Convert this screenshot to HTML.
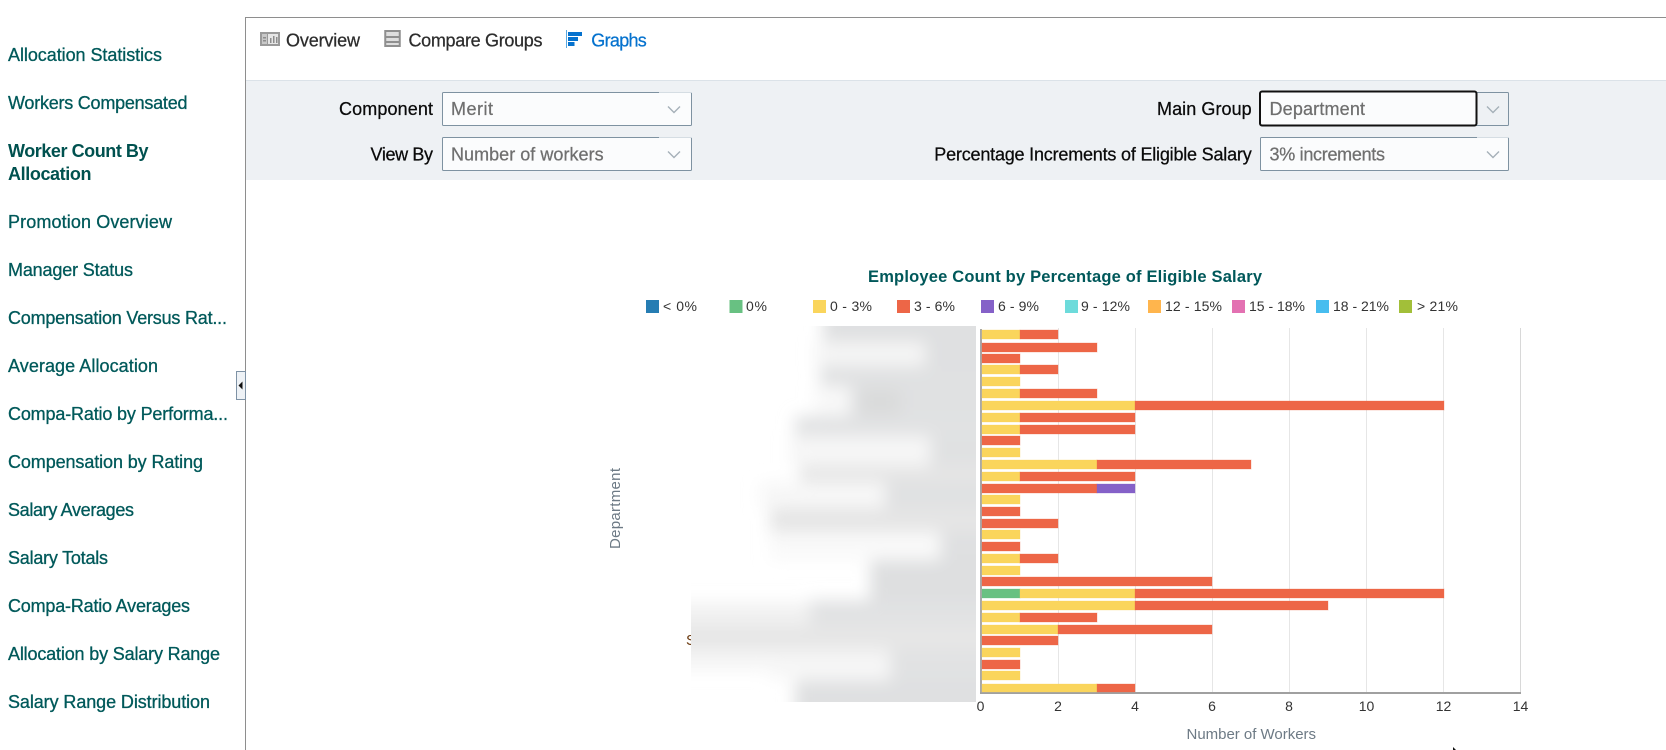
<!DOCTYPE html>
<html lang="en">
<head>
<meta charset="utf-8">
<title>Worker Count By Allocation</title>
<style>
html,body{margin:0;padding:0;background:#fff;width:1666px;height:750px;overflow:hidden}
svg{display:block;font-family:"Liberation Sans",sans-serif}
.s{font-size:18px;fill:#00595a;stroke:#00595a;stroke-width:.3px}
.sb{font-size:18px;fill:#00514f;font-weight:bold}
.t{font-size:18px;fill:#2c2c2c;stroke:#2c2c2c;stroke-width:.25px}
.l{font-size:18px;fill:#0a0a0a;stroke:#0a0a0a;stroke-width:.25px}
.v{font-size:18px;fill:#6f6f6f;stroke:#6f6f6f;stroke-width:.25px}
.lg{font-size:14px;fill:#333}
.x{font-size:14px;fill:#333;text-anchor:middle}
.y{fill:#fad55c;stroke:#fad55c}
.r{fill:#ed6647;stroke:#ed6647}
.p{fill:#8561c8;stroke:#8561c8}
.g{fill:#68c182;stroke:#68c182}
.bars rect{stroke-opacity:.3;stroke-width:1}
</style>
</head>
<body>
<svg width="1666" height="750" viewBox="0 0 1666 750" xmlns="http://www.w3.org/2000/svg">
<defs>
<filter id="b" x="-20%" y="-20%" width="140%" height="140%"><feGaussianBlur stdDeviation="8"/></filter>
<clipPath id="c2"><rect x="691" y="326" width="285" height="376"/></clipPath>
</defs>
<rect width="1666" height="750" fill="#fff"/>

<!-- sidebar -->
<text class="s" x="8" y="61" textLength="154">Allocation Statistics</text>
<text class="s" x="8" y="109" textLength="179.5">Workers Compensated</text>
<text class="sb" x="8" y="157" textLength="140.5">Worker Count By</text>
<text class="sb" x="8" y="180" textLength="83.5">Allocation</text>
<text class="s" x="8" y="228" textLength="164">Promotion Overview</text>
<text class="s" x="8" y="276" textLength="125">Manager Status</text>
<text class="s" x="8" y="324" textLength="219">Compensation Versus Rat...</text>
<text class="s" x="8" y="372" textLength="150">Average Allocation</text>
<text class="s" x="8" y="420" textLength="220">Compa-Ratio by Performa...</text>
<text class="s" x="8" y="468" textLength="195">Compensation by Rating</text>
<text class="s" x="8" y="516" textLength="126">Salary Averages</text>
<text class="s" x="8" y="564" textLength="100">Salary Totals</text>
<text class="s" x="8" y="612" textLength="182">Compa-Ratio Averages</text>
<text class="s" x="8" y="660" textLength="212">Allocation by Salary Range</text>
<text class="s" x="8" y="708" textLength="202">Salary Range Distribution</text>

<!-- panel frame -->
<path d="M245.5 750V17.5H1666" fill="none" stroke="#8e8e8e" stroke-width="1"/>

<!-- collapse handle -->
<rect x="236.5" y="371.5" width="9" height="28" fill="#eef2f6" stroke="#7e92a5"/>
<path d="M238.5 385.5L242.5 381.5V389.5Z" fill="#111"/>

<!-- tabs -->
<rect x="260" y="32" width="20" height="14" fill="#9a9a9a"/>
<rect x="262" y="34" width="5" height="10" fill="#c8c8c8"/>
<rect x="263" y="37" width="3" height="1.5" fill="#8d8d8d"/>
<rect x="263" y="40" width="3" height="1.5" fill="#8d8d8d"/>
<rect x="268" y="34" width="10" height="10" fill="#e6e6e6"/>
<rect x="270" y="38" width="1.5" height="5" fill="#8d8d8d"/>
<rect x="273" y="36" width="1.5" height="7" fill="#8d8d8d"/>
<rect x="276" y="37" width="1.5" height="6" fill="#8d8d8d"/>
<text class="t" x="286" y="46.5" textLength="74">Overview</text>

<rect x="385.25" y="31" width="14.5" height="15" fill="#dedede" stroke="#8f8f8f" stroke-width="2"/>
<rect x="385" y="36" width="15" height="2" fill="#8f8f8f"/>
<rect x="385" y="41" width="15" height="2" fill="#8f8f8f"/>
<text class="t" x="408.5" y="46.5" textLength="134">Compare Groups</text>

<rect x="566" y="30" width="1" height="18" fill="#5aa8e0"/>
<rect x="568" y="32" width="14" height="4" fill="#0572ce"/>
<rect x="568" y="37" width="10" height="4" fill="#0572ce"/>
<rect x="568" y="42" width="6.5" height="4" fill="#0572ce"/>
<text x="591.3" y="46.5" font-size="18" fill="#0572ce" stroke="#0572ce" stroke-width=".25" textLength="55.5">Graphs</text>

<!-- filter band -->
<rect x="246" y="80" width="1420" height="100" fill="#eef1f4"/>
<rect x="246" y="80" width="1420" height="1" fill="#dbe2e8"/>

<text class="l" x="339" y="115" textLength="94">Component</text>
<text class="l" x="370.5" y="160.5" textLength="62.5">View By</text>
<text class="l" x="1157" y="115" textLength="94.7">Main Group</text>
<text class="l" x="934.3" y="160.5" textLength="317.4">Percentage Increments of Eligible Salary</text>

<rect x="442.5" y="92.5" width="249" height="33" rx="1" fill="#fbfcfd" stroke="#7e92a1"/>
<rect x="659" y="92" width="33" height="1" fill="#d5dde3"/>
<path d="M668 106.5L674 112.5L680 106.5" fill="none" stroke="#a5b0b8" stroke-width="1.4"/>
<text class="v" x="451" y="115" textLength="42">Merit</text>

<rect x="442.5" y="137.5" width="249" height="33" rx="1" fill="#fbfcfd" stroke="#7e92a1"/>
<rect x="659" y="137" width="33" height="1" fill="#d5dde3"/>
<path d="M668 151.5L674 157.5L680 151.5" fill="none" stroke="#a5b0b8" stroke-width="1.4"/>
<text class="v" x="451" y="160.5" textLength="152.6">Number of workers</text>

<rect x="1260.5" y="92.5" width="248" height="33" rx="1" fill="#eef1f4" stroke="#7e92a1"/>
<path d="M1487 106.5L1493 112.5L1499 106.5" fill="none" stroke="#a5b0b8" stroke-width="1.4"/>
<rect x="1260" y="91.5" width="216.5" height="34" rx="2" fill="#fbfcfd" stroke="#111" stroke-width="2"/>
<text class="v" x="1269.5" y="115" textLength="95.5">Department</text>

<rect x="1260.5" y="137.5" width="248" height="33" rx="1" fill="#fbfcfd" stroke="#7e92a1"/>
<rect x="1477" y="137" width="32" height="1" fill="#d5dde3"/>
<path d="M1487 151.5L1493 157.5L1499 151.5" fill="none" stroke="#a5b0b8" stroke-width="1.4"/>
<text class="v" x="1269.5" y="160.5" textLength="115.5">3% increments</text>

<!-- chart title -->
<text x="868" y="282" font-size="16.5" font-weight="bold" fill="#00585a" textLength="394">Employee Count by Percentage of Eligible Salary</text>

<!-- legend -->
<rect x="646" y="300" width="13" height="13" fill="#267db3"/><text class="lg" x="663" y="311" textLength="34">&lt; 0%</text>
<rect x="729.5" y="300" width="13" height="13" fill="#68c182"/><text class="lg" x="746" y="311" textLength="21">0%</text>
<rect x="813" y="300" width="13" height="13" fill="#fad55c"/><text class="lg" x="830" y="311" textLength="42">0 - 3%</text>
<rect x="897" y="300" width="13" height="13" fill="#ed6647"/><text class="lg" x="914" y="311" textLength="41">3 - 6%</text>
<rect x="981" y="300" width="13" height="13" fill="#8561c8"/><text class="lg" x="998" y="311" textLength="41">6 - 9%</text>
<rect x="1065" y="300" width="13" height="13" fill="#6ddbdb"/><text class="lg" x="1081" y="311" textLength="49">9 - 12%</text>
<rect x="1148" y="300" width="13" height="13" fill="#ffb54d"/><text class="lg" x="1165" y="311" textLength="57">12 - 15%</text>
<rect x="1232" y="300" width="13" height="13" fill="#e371b2"/><text class="lg" x="1249" y="311" textLength="56">15 - 18%</text>
<rect x="1316" y="300" width="13" height="13" fill="#47bdef"/><text class="lg" x="1333" y="311" textLength="56">18 - 21%</text>
<rect x="1399" y="300" width="13" height="13" fill="#a2bf39"/><text class="lg" x="1417" y="311" textLength="41">&gt; 21%</text>

<!-- axis titles -->
<text transform="translate(620 549) rotate(-90)" font-size="15" fill="#6d7a85" textLength="81">Department</text>
<text x="1186.5" y="739" font-size="15" fill="#6d7a85" textLength="129.5">Number of Workers</text>

<!-- obscured labels -->
<text x="686" y="645" font-size="15" fill="#6b3a10">S</text>
<g clip-path="url(#c2)">
<rect x="691" y="326" width="285" height="376" fill="#fff"/>
<g filter="url(#b)">
<rect x="823" y="300" width="180" height="42" fill="#dfe0e1"/>
<rect x="815" y="342" width="110" height="24" fill="#f5f5f5"/>
<rect x="925" y="342" width="78" height="24" fill="#dfe0e1"/>
<rect x="820" y="366" width="183" height="20" fill="#e0e1e2"/>
<rect x="815" y="386" width="40" height="30" fill="#f8f8f8"/>
<rect x="850" y="386" width="153" height="30" fill="#e0e1e2"/>
<rect x="860" y="390" width="40" height="24" fill="#d9dada"/>
<rect x="795" y="416" width="208" height="20" fill="#e1e2e3"/>
<rect x="790" y="436" width="140" height="30" fill="#f6f6f6"/>
<rect x="930" y="436" width="73" height="30" fill="#e0e1e2"/>
<rect x="800" y="466" width="203" height="16" fill="#e5e5e5"/>
<rect x="760" y="482" width="125" height="26" fill="#f7f7f7"/>
<rect x="885" y="482" width="118" height="26" fill="#e0e1e2"/>
<rect x="770" y="508" width="233" height="24" fill="#e5e5e5"/>
<rect x="770" y="532" width="170" height="28" fill="#f9f9f9"/>
<rect x="940" y="532" width="63" height="28" fill="#dfe0e1"/>
<rect x="870" y="560" width="133" height="40" fill="#dedfe0"/>
<rect x="655" y="603" width="155" height="22" fill="#f1f1f1"/>
<rect x="810" y="600" width="193" height="25" fill="#e1e2e3"/>
<rect x="655" y="625" width="348" height="25" fill="#e6e6e6"/>
<rect x="655" y="650" width="235" height="20" fill="#f5f5f5"/>
<rect x="890" y="650" width="113" height="30" fill="#e1e2e3"/>
<rect x="770" y="670" width="120" height="10" fill="#f8f8f8"/>
<rect x="795" y="680" width="208" height="45" fill="#dfe0e1"/>
</g>
</g>

<!-- grid -->
<g fill="#e6e6e6">
<rect x="1058" y="328" width="1" height="364"/>
<rect x="1135" y="328" width="1" height="364"/>
<rect x="1212" y="328" width="1" height="364"/>
<rect x="1289" y="328" width="1" height="364"/>
<rect x="1366" y="328" width="1" height="364"/>
<rect x="1443" y="328" width="1" height="364"/>
</g>
<rect x="1520" y="328" width="1" height="365" fill="#d8d8d8"/>
<rect x="980" y="329" width="2" height="365" fill="#a8a8a8"/>
<rect x="980" y="692" width="541" height="2" fill="#a0a0a0"/>

<!-- bars -->
<g class="bars" shape-rendering="crispEdges">
<rect class="y" x="982" y="330" width="38" height="9"/><rect class="r" x="1020" y="330" width="38" height="9"/>
<rect class="r" x="982" y="343" width="115" height="9"/>
<rect class="r" x="982" y="354" width="38" height="9"/>
<rect class="y" x="982" y="365" width="38" height="9"/><rect class="r" x="1020" y="365" width="38" height="9"/>
<rect class="y" x="982" y="377" width="38" height="9"/>
<rect class="y" x="982" y="389" width="38" height="9"/><rect class="r" x="1020" y="389" width="77" height="9"/>
<rect class="y" x="982" y="401" width="153" height="9"/><rect class="r" x="1135" y="401" width="309" height="9"/>
<rect class="y" x="982" y="413" width="38" height="9"/><rect class="r" x="1020" y="413" width="115" height="9"/>
<rect class="y" x="982" y="425" width="38" height="9"/><rect class="r" x="1020" y="425" width="115" height="9"/>
<rect class="r" x="982" y="436" width="38" height="9"/>
<rect class="y" x="982" y="448" width="38" height="9"/>
<rect class="y" x="982" y="460" width="115" height="9"/><rect class="r" x="1097" y="460" width="154" height="9"/>
<rect class="y" x="982" y="472" width="38" height="9"/><rect class="r" x="1020" y="472" width="115" height="9"/>
<rect class="r" x="982" y="484" width="115" height="9"/><rect class="p" x="1097" y="484" width="38" height="9"/>
<rect class="y" x="982" y="495" width="38" height="9"/>
<rect class="r" x="982" y="507" width="38" height="9"/>
<rect class="r" x="982" y="519" width="76" height="9"/>
<rect class="y" x="982" y="530" width="38" height="9"/>
<rect class="r" x="982" y="542" width="38" height="9"/>
<rect class="y" x="982" y="554" width="38" height="9"/><rect class="r" x="1020" y="554" width="38" height="9"/>
<rect class="y" x="982" y="566" width="38" height="9"/>
<rect class="r" x="982" y="577" width="230" height="9"/>
<rect class="g" x="982" y="589" width="38" height="9"/><rect class="y" x="1020" y="589" width="115" height="9"/><rect class="r" x="1135" y="589" width="309" height="9"/>
<rect class="y" x="982" y="601" width="153" height="9"/><rect class="r" x="1135" y="601" width="193" height="9"/>
<rect class="y" x="982" y="613" width="38" height="9"/><rect class="r" x="1020" y="613" width="77" height="9"/>
<rect class="y" x="982" y="625" width="76" height="9"/><rect class="r" x="1058" y="625" width="154" height="9"/>
<rect class="r" x="982" y="636" width="76" height="9"/>
<rect class="y" x="982" y="648" width="38" height="9"/>
<rect class="r" x="982" y="660" width="38" height="9"/>
<rect class="y" x="982" y="671" width="38" height="9"/>
<rect class="y" x="982" y="684" width="115" height="8"/><rect class="r" x="1097" y="684" width="38" height="8"/>
</g>

<!-- x axis labels -->
<text class="x" x="980.5" y="711">0</text>
<text class="x" x="1058" y="711">2</text>
<text class="x" x="1135" y="711">4</text>
<text class="x" x="1212" y="711">6</text>
<text class="x" x="1289" y="711">8</text>
<text class="x" x="1366.5" y="711">10</text>
<text class="x" x="1443.5" y="711">12</text>
<text class="x" x="1520.5" y="711">14</text>

<!-- pointer fragment -->
<path d="M1453 747V750H1456Z" fill="#111"/>
</svg>
</body>
</html>
